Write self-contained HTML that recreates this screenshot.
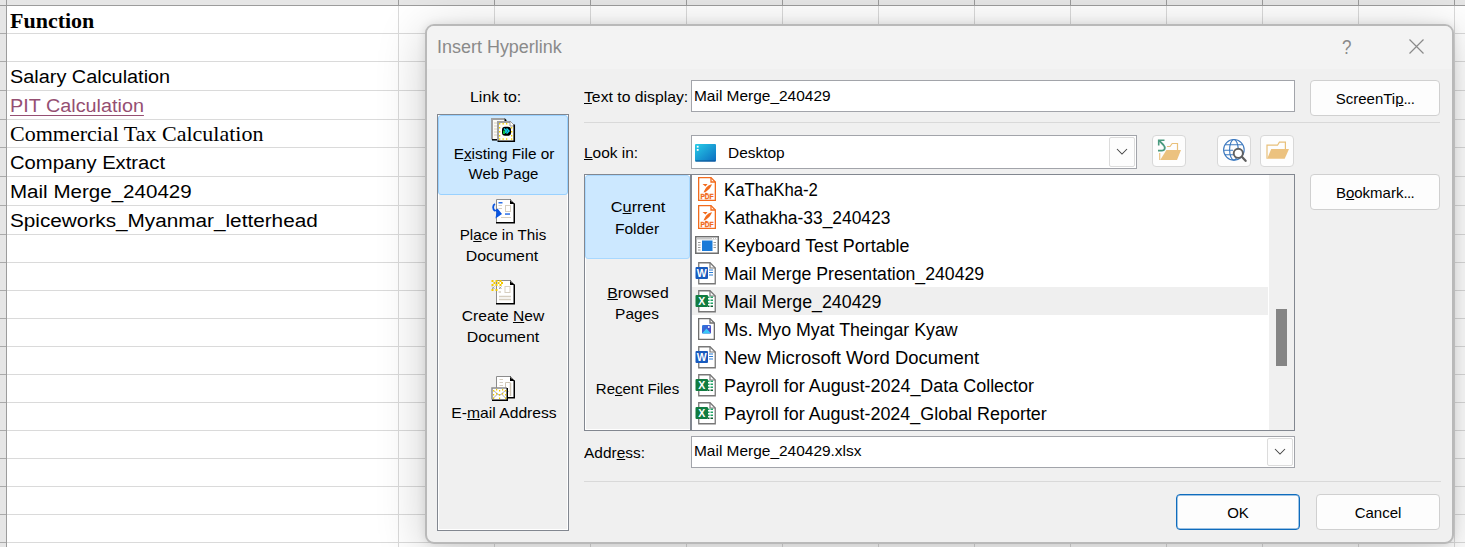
<!DOCTYPE html>
<html><head><meta charset="utf-8">
<style>
*{margin:0;padding:0;box-sizing:border-box}
html,body{width:1465px;height:547px;overflow:hidden;background:#fff;font-family:"Liberation Sans",sans-serif}
.abs{position:absolute}
.vl{position:absolute;top:0;width:1px;height:547px;background:#dadada}
.hl{position:absolute;left:0;height:1px;width:1465px;background:#dadada}
.t{position:absolute;white-space:nowrap;line-height:1;color:#000}
.u{text-decoration:underline;text-decoration-thickness:1px;text-underline-offset:1.2px}
.btn{position:absolute;background:#fdfdfd;border:1px solid #d0d0d0;border-radius:4px}
.inp{position:absolute;background:#fff;border:1px solid #a2a4aa}
.sep{position:absolute;height:1px;background:#d9d9d9}
svg{position:absolute;overflow:visible}
</style></head><body>
<div class="abs" style="left:0;top:0;width:1465px;height:5px;background:#e6e6e6"></div>
<div class="abs" style="left:0;top:0;width:6px;height:547px;background:#e6e6e6"></div>
<div class="hl" style="top:33px"></div>
<div class="hl" style="top:61px"></div>
<div class="hl" style="top:90px"></div>
<div class="hl" style="top:119px"></div>
<div class="hl" style="top:147px"></div>
<div class="hl" style="top:176px"></div>
<div class="hl" style="top:205px"></div>
<div class="hl" style="top:234px"></div>
<div class="hl" style="top:262px"></div>
<div class="hl" style="top:290px"></div>
<div class="hl" style="top:318px"></div>
<div class="hl" style="top:346px"></div>
<div class="hl" style="top:374px"></div>
<div class="hl" style="top:402px"></div>
<div class="hl" style="top:430px"></div>
<div class="hl" style="top:458px"></div>
<div class="hl" style="top:486px"></div>
<div class="hl" style="top:514px"></div>
<div class="hl" style="top:542px"></div>
<div class="vl" style="left:398px"></div>
<div class="vl" style="left:494px"></div>
<div class="vl" style="left:590px"></div>
<div class="vl" style="left:686px"></div>
<div class="vl" style="left:782px"></div>
<div class="vl" style="left:878px"></div>
<div class="vl" style="left:974px"></div>
<div class="vl" style="left:1070px"></div>
<div class="vl" style="left:1166px"></div>
<div class="vl" style="left:1262px"></div>
<div class="vl" style="left:1358px"></div>
<div class="vl" style="left:1454px"></div>
<div class="abs" style="left:398px;top:0;width:1px;height:5px;background:#9c9c9c"></div>
<div class="abs" style="left:494px;top:0;width:1px;height:5px;background:#9c9c9c"></div>
<div class="abs" style="left:590px;top:0;width:1px;height:5px;background:#9c9c9c"></div>
<div class="abs" style="left:686px;top:0;width:1px;height:5px;background:#9c9c9c"></div>
<div class="abs" style="left:782px;top:0;width:1px;height:5px;background:#9c9c9c"></div>
<div class="abs" style="left:878px;top:0;width:1px;height:5px;background:#9c9c9c"></div>
<div class="abs" style="left:974px;top:0;width:1px;height:5px;background:#9c9c9c"></div>
<div class="abs" style="left:1070px;top:0;width:1px;height:5px;background:#9c9c9c"></div>
<div class="abs" style="left:1166px;top:0;width:1px;height:5px;background:#9c9c9c"></div>
<div class="abs" style="left:1262px;top:0;width:1px;height:5px;background:#9c9c9c"></div>
<div class="abs" style="left:1358px;top:0;width:1px;height:5px;background:#9c9c9c"></div>
<div class="abs" style="left:1454px;top:0;width:1px;height:5px;background:#9c9c9c"></div>
<div class="abs" style="left:0;top:5px;width:1465px;height:1px;background:#9c9c9c"></div>
<div class="abs" style="left:6px;top:0;width:1px;height:547px;background:#9c9c9c"></div>
<div class="abs" style="left:0;top:33px;width:6px;height:1px;background:#ababab"></div>
<div class="abs" style="left:0;top:61px;width:6px;height:1px;background:#ababab"></div>
<div class="abs" style="left:0;top:90px;width:6px;height:1px;background:#ababab"></div>
<div class="abs" style="left:0;top:119px;width:6px;height:1px;background:#ababab"></div>
<div class="abs" style="left:0;top:147px;width:6px;height:1px;background:#ababab"></div>
<div class="abs" style="left:0;top:176px;width:6px;height:1px;background:#ababab"></div>
<div class="abs" style="left:0;top:205px;width:6px;height:1px;background:#ababab"></div>
<div class="abs" style="left:0;top:234px;width:6px;height:1px;background:#ababab"></div>
<div class="abs" style="left:0;top:262px;width:6px;height:1px;background:#ababab"></div>
<div class="abs" style="left:0;top:290px;width:6px;height:1px;background:#ababab"></div>
<div class="abs" style="left:0;top:318px;width:6px;height:1px;background:#ababab"></div>
<div class="abs" style="left:0;top:346px;width:6px;height:1px;background:#ababab"></div>
<div class="abs" style="left:0;top:374px;width:6px;height:1px;background:#ababab"></div>
<div class="abs" style="left:0;top:402px;width:6px;height:1px;background:#ababab"></div>
<div class="abs" style="left:0;top:430px;width:6px;height:1px;background:#ababab"></div>
<div class="abs" style="left:0;top:458px;width:6px;height:1px;background:#ababab"></div>
<div class="abs" style="left:0;top:486px;width:6px;height:1px;background:#ababab"></div>
<div class="abs" style="left:0;top:514px;width:6px;height:1px;background:#ababab"></div>
<div class="abs" style="left:0;top:542px;width:6px;height:1px;background:#ababab"></div>
<div class="t" style="left:10px;top:10.38px;font-size:22px;color:#000;font-family:'Liberation Serif',serif;font-weight:bold;">Function</div>
<div class="t" style="left:10px;top:67.76px;font-size:18px;color:#000;font-family:'Liberation Sans',sans-serif;font-weight:normal;transform:scaleX(1.104);transform-origin:left top;">Salary Calculation</div>
<div class="t" style="left:10px;top:97.26px;font-size:18px;color:#954f72;font-family:'Liberation Sans',sans-serif;font-weight:normal;transform:scaleX(1.1);transform-origin:left top;"><span class="u" style="text-underline-offset:2.5px">PIT Calculation</span></div>
<div class="t" style="left:10px;top:123.08px;font-size:22px;color:#000;font-family:'Liberation Serif',serif;font-weight:normal;">Commercial Tax Calculation</div>
<div class="t" style="left:10px;top:154.26px;font-size:18px;color:#000;font-family:'Liberation Sans',sans-serif;font-weight:normal;transform:scaleX(1.123);transform-origin:left top;">Company Extract</div>
<div class="t" style="left:10px;top:183.06px;font-size:18px;color:#000;font-family:'Liberation Sans',sans-serif;font-weight:normal;transform:scaleX(1.142);transform-origin:left top;">Mail Merge_240429</div>
<div class="t" style="left:10px;top:211.96px;font-size:18px;color:#000;font-family:'Liberation Sans',sans-serif;font-weight:normal;transform:scaleX(1.152);transform-origin:left top;">Spiceworks_Myanmar_letterhead</div>
<div class="abs" style="left:425px;top:24px;width:1029px;height:520px;background:#f0f0f0;border:2px solid #b9b9b9;border-radius:9px;box-shadow:0 0 10px rgba(0,0,0,0.10),0 8px 50px rgba(0,0,0,0.20);overflow:hidden"><div class="abs" style="left:0;top:0;width:100%;height:43px;background:#f3f3f3"></div></div>
<div class="t" style="left:437.4px;top:37.86px;font-size:18px;color:#8a8a8a;font-family:'Liberation Sans',sans-serif;font-weight:normal;transform:scaleX(0.998);transform-origin:left top;">Insert Hyperlink</div>
<div class="t" style="left:1342px;top:36.97px;font-size:20px;color:#8a8a8a;font-family:'Liberation Sans',sans-serif;font-weight:normal;transform:scaleX(0.85);transform-origin:left top;">?</div>
<svg style="left:1409px;top:39px" width="15" height="15"><path d="M0.5 0.5L14.5 14.5M14.5 0.5L0.5 14.5" stroke="#8a8a8a" stroke-width="1.2"/></svg>
<div class="t" style="left:470.2px;top:89.30px;font-size:15px;color:#000;font-family:'Liberation Sans',sans-serif;font-weight:normal;transform:scaleX(1.06);transform-origin:left top;">Link to:</div>
<div class="abs" style="left:437px;top:114px;width:132px;height:417px;border:1px solid #828790;background:#f0f0f0;box-shadow:inset 0 0 0 1px #fff"></div>
<div class="abs" style="left:438px;top:115px;width:130px;height:80px;background:#cce8ff;border:1px solid #99d1ff;border-radius:3px"></div>
<div class="t" style="left:303.5px;width:400px;text-align:center;top:146.30px;font-size:15px;color:#000;font-family:'Liberation Sans',sans-serif;font-weight:normal;transform:scaleX(1.024);transform-origin:center top;">E<span class="u">x</span>isting File or</div>
<div class="t" style="left:303.5px;width:400px;text-align:center;top:166.40px;font-size:15px;color:#000;font-family:'Liberation Sans',sans-serif;font-weight:normal;">Web Page</div>
<div class="t" style="left:302.8px;width:400px;text-align:center;top:227.30px;font-size:15px;color:#000;font-family:'Liberation Sans',sans-serif;font-weight:normal;transform:scaleX(1.01);transform-origin:center top;">Pl<span class="u">a</span>ce in This</div>
<div class="t" style="left:302.4px;width:400px;text-align:center;top:248.30px;font-size:15px;color:#000;font-family:'Liberation Sans',sans-serif;font-weight:normal;transform:scaleX(1.06);transform-origin:center top;">Document</div>
<div class="t" style="left:302.8px;width:400px;text-align:center;top:307.90px;font-size:15px;color:#000;font-family:'Liberation Sans',sans-serif;font-weight:normal;transform:scaleX(1.04);transform-origin:center top;">Create <span class="u">N</span>ew</div>
<div class="t" style="left:302.6px;width:400px;text-align:center;top:329.30px;font-size:15px;color:#000;font-family:'Liberation Sans',sans-serif;font-weight:normal;transform:scaleX(1.06);transform-origin:center top;">Document</div>
<div class="t" style="left:303.5px;width:400px;text-align:center;top:404.60px;font-size:15px;color:#000;font-family:'Liberation Sans',sans-serif;font-weight:normal;transform:scaleX(1.045);transform-origin:center top;">E-<span class="u">m</span>ail Address</div>
<svg style="left:491px;top:118px" width="25" height="25" viewBox="0 0 25 25">
<path d="M0.5 0.5H13.5L15 2V21.5H0.5Z" fill="#fbfbf8"/>
<path d="M1 21.5V1H13.5" stroke="#a0a0a0" stroke-width="2" fill="none"/>
<path d="M13.5 0L15.5 2V4H13.5Z" fill="#000"/>
<path d="M1 21.8H6" stroke="#000" stroke-width="1.5"/>
<g stroke="#d8d0c0"><path d="M3 5H6M3 8H6M3 11H6M3 14H6M3 17H6"/></g>
<path d="M6.5 3.5H19.5L23.5 7.5V23H6.5Z" fill="#fffef8"/>
<path d="M7 23V4H19" stroke="#a0a0a0" stroke-width="2" fill="none"/>
<path d="M19 3L24 8H19Z" fill="#fff" stroke="#888" stroke-width="0.8"/>
<path d="M23.25 6.5V23.25H6.5" stroke="#000" stroke-width="1.6" fill="none"/>
<g fill="#f5d400"><rect x="8" y="5" width="1.3" height="1.5"/><rect x="11.5" y="5" width="1.3" height="1.5"/><rect x="15" y="5" width="1.3" height="1.5"/><rect x="8" y="9" width="1.3" height="1.5"/><rect x="8" y="13" width="1.3" height="1.5"/><rect x="8" y="17" width="1.3" height="1.5"/><rect x="8" y="20.3" width="1.3" height="1.5"/><rect x="20" y="9" width="1.3" height="1.5"/><rect x="20" y="13" width="1.3" height="1.5"/><rect x="20" y="17" width="1.3" height="1.5"/><rect x="20" y="20.3" width="1.3" height="1.5"/><rect x="11.5" y="20.3" width="1.3" height="1.5"/><rect x="15" y="20.3" width="1.3" height="1.5"/></g>
<rect x="11" y="8.8" width="9" height="9" rx="3" fill="#000"/>
<path d="M13 10.5L15.5 13L13 15.5M15.5 10.5L18 13L15.5 15.5" stroke="#18d8f0" stroke-width="1.5" fill="none"/>
<rect x="12" y="12.5" width="2" height="3.5" fill="#10c040"/>
</svg>
<svg style="left:491px;top:199px" width="25" height="25" viewBox="0 0 25 25">
<path d="M5.5 0.5H19.5L23.5 4.5V23.5H5.5Z" fill="#fff"/>
<path d="M5.5 23.5V0.5H19.5" stroke="#8c8c8c" fill="none"/>
<path d="M19 0L24 5H19Z" fill="#000"/><path d="M19.8 1.5L20.8 2.5" stroke="#fff"/>
<path d="M23.25 4.5V23.75H5" stroke="#000" stroke-width="1.5" fill="none"/>
<rect x="7.5" y="3" width="4" height="1.5" fill="#2a6fe8"/>
<path d="M7.5 6.5H11M7.5 9.5H11M10 18.5H20" stroke="#d6cec0" stroke-width="1.2"/>
<rect x="14.5" y="6.5" width="5" height="6" fill="none" stroke="#d6cec0"/>
<rect x="14" y="14.3" width="5" height="1.5" fill="#2a6fe8"/>
<path d="M4 5C1.5 6 1.5 10.5 4 12" stroke="#0a55e0" stroke-width="1.8" fill="none"/>
<path d="M3.5 11.5L5.5 13L4.5 19.5L11 15L6.5 9.5Z" fill="#0a55e0"/>
</svg>
<svg style="left:491px;top:279px" width="25" height="26" viewBox="0 0 25 26">
<path d="M5.5 1.5H19.5L23.5 5.5V24.5H5.5Z" fill="#fff"/>
<path d="M5.5 24.5V1.5H19.5" stroke="#8c8c8c" fill="none"/>
<path d="M19 1L24 6H19Z" fill="#000"/><path d="M19.8 2.5L20.8 3.5" stroke="#fff"/>
<path d="M23.25 5.5V24.75H5" stroke="#000" stroke-width="1.5" fill="none"/>
<path d="M7.5 13H10M8 17.5H20M8 20.5H20" stroke="#d6cec0" stroke-width="1.3"/>
<rect x="14" y="7.5" width="5" height="6" fill="none" stroke="#d6cec0"/>
<g fill="#f2c800"><rect x="0.5" y="1" width="2" height="2"/><rect x="4.5" y="1" width="2" height="2"/><rect x="8.5" y="1" width="2" height="2"/><rect x="2.5" y="3" width="2" height="2"/><rect x="6.5" y="3" width="2" height="2"/><rect x="10" y="3" width="2" height="2"/><rect x="0.5" y="5" width="2" height="2"/><rect x="4.5" y="5" width="2" height="2"/><rect x="8.5" y="5" width="2" height="2"/><rect x="0.5" y="10" width="2" height="2"/><rect x="4.5" y="10" width="2" height="2"/></g>
<g stroke="#9a9a9a" stroke-width="0.9"><path d="M1 7.5L3.5 10M3.5 7.5L1 10M8 7.5L10.5 10M10.5 7.5L8 10"/></g>
</svg>
<svg style="left:491px;top:376px" width="25" height="25" viewBox="0 0 25 25">
<path d="M5.5 0.5H19.5L23.5 4.5V21.5H5.5Z" fill="#fff"/>
<path d="M5.5 12V0.5H19.5" stroke="#8c8c8c" fill="none"/>
<path d="M19 0L24 5H19Z" fill="#000"/><path d="M19.8 1.5L20.8 2.5" stroke="#fff"/>
<path d="M23.25 4.5V21.75H16" stroke="#000" stroke-width="1.5" fill="none"/>
<path d="M8.5 3.5H12M8.5 6.5H12M8.5 9.5H12M15 15.5H18" stroke="#d6cec0" stroke-width="1.2"/>
<path d="M14.5 20V6.5H19.5" stroke="#cfc6b6" fill="none"/><path d="M19.5 7V20" stroke="#cfc6b6" stroke-width="1.5"/>
<rect x="1" y="12" width="15.5" height="11" fill="#fff"/>
<path d="M1 23.5V12H16" stroke="#8c8c8c" stroke-width="1.5" fill="none"/>
<path d="M16.25 12V24.25H1" stroke="#000" stroke-width="1.5" fill="none"/>
<path d="M2.5 14.5L8.5 19.5L14.5 14.5M2.5 22L6.5 18M14.5 22L10.5 18" stroke="#a8a8b8" stroke-width="1" fill="none"/>
<g fill="#f0c800"><rect x="2" y="14" width="1.2" height="1.5"/><rect x="2" y="18" width="1.2" height="1.5"/><rect x="2" y="21.5" width="1.2" height="1.5"/><rect x="5" y="13" width="1.2" height="1.5"/><rect x="5" y="17" width="1.2" height="1.5"/><rect x="8" y="14" width="1.2" height="1.5"/><rect x="8" y="18" width="1.2" height="1.5"/><rect x="8" y="21.5" width="1.2" height="1.5"/><rect x="11" y="13" width="1.2" height="1.5"/><rect x="11" y="17" width="1.2" height="1.5"/><rect x="14" y="14" width="1.2" height="1.5"/><rect x="14" y="18" width="1.2" height="1.5"/><rect x="14" y="21.5" width="1.2" height="1.5"/></g>
</svg>
<div class="t" style="left:584px;top:89.00px;font-size:15px;color:#000;font-family:'Liberation Sans',sans-serif;font-weight:normal;transform:scaleX(1.05);transform-origin:left top;"><span class="u">T</span>ext to display:</div>
<div class="inp" style="left:691px;top:80px;width:604px;height:32px"></div>
<div class="t" style="left:694.3px;top:87.50px;font-size:15px;color:#000;font-family:'Liberation Sans',sans-serif;font-weight:normal;transform:scaleX(1.03);transform-origin:left top;">Mail Merge_240429</div>
<div class="btn" style="left:1310px;top:80px;width:130px;height:36px"></div>
<div class="t" style="left:1175px;width:400px;text-align:center;top:91.30px;font-size:15px;color:#000;font-family:'Liberation Sans',sans-serif;font-weight:normal;">ScreenTi<span class="u">p</span><span style="letter-spacing:-0.6px">...</span></div>
<div class="sep" style="left:584px;top:122px;width:856px"></div>
<div class="t" style="left:584px;top:145.30px;font-size:15px;color:#000;font-family:'Liberation Sans',sans-serif;font-weight:normal;transform:scaleX(1.03);transform-origin:left top;"><span class="u">L</span>ook in:</div>
<div class="inp" style="left:691px;top:135px;width:446px;height:34px"></div>
<div class="abs" style="left:1109px;top:137px;width:26px;height:30px;background:#fdfdfd;border:1px solid #dcdcdc;border-radius:2px"></div>
<svg style="left:1116px;top:148px" width="12" height="8"><path d="M1 1L6 6L11 1" stroke="#444" stroke-width="1.05" fill="none"/></svg>
<svg style="left:695px;top:144px" width="22" height="18" viewBox="0 0 22 18"><defs><linearGradient id="dg" x1="0" y1="0" x2="1" y2="1"><stop offset="0" stop-color="#28cde8"/><stop offset="1" stop-color="#0b6cc0"/></linearGradient></defs><rect x="0" y="0" width="21" height="17.5" rx="1" fill="url(#dg)"/><rect x="0.5" y="16.5" width="20" height="1" fill="#0a4f90"/><rect x="1.8" y="1.8" width="1.8" height="1.8" fill="#fff"/><rect x="1.8" y="5" width="1.8" height="1.8" fill="#fff"/></svg>
<div class="t" style="left:727.5px;top:145.30px;font-size:15px;color:#000;font-family:'Liberation Sans',sans-serif;font-weight:normal;transform:scaleX(1.03);transform-origin:left top;">Desktop</div>
<div class="btn" style="left:1152px;top:135px;width:34px;height:32px;border-color:#d8d8d8"></div>
<div class="btn" style="left:1217px;top:135px;width:34px;height:32px;border-color:#d8d8d8"></div>
<div class="btn" style="left:1260px;top:135px;width:34px;height:32px;border-color:#d8d8d8"></div>
<svg style="left:1157px;top:139px" width="26" height="24" viewBox="0 0 26 24">
<path d="M10 7.5H13L15.2 4.5H20.5V11.5" fill="none" stroke="#e9c07a" stroke-width="1.2"/>
<path d="M2.7 14V21" stroke="#ecc27f" stroke-width="1.2"/>
<path d="M9.4 11H24L20 21H3.2Z" fill="#ecc27f"/>
<path d="M1.7 6.5V1.2H7.5" fill="none" stroke="#4a9a7f" stroke-width="1.6"/>
<path d="M2.2 1.7L6.5 6C8.6 8.2 8.2 11.6 4.8 11.6H1" fill="none" stroke="#4a9a7f" stroke-width="1.8"/>
</svg>
<svg style="left:1222px;top:139px" width="26" height="25" viewBox="0 0 26 25">
<circle cx="11.9" cy="10.8" r="10.3" fill="none" stroke="#3b78bf" stroke-width="1.1"/>
<ellipse cx="11.9" cy="10.8" rx="4.3" ry="10.3" fill="none" stroke="#3b78bf" stroke-width="1.1"/>
<path d="M3 5.8H20.8M3 15.8H20.8M1.6 11.2H11" stroke="#3b78bf" stroke-width="1.1"/>
<circle cx="16.3" cy="14.3" r="4.6" fill="#fff" stroke="#5f5f5f" stroke-width="1.9"/>
<path d="M19.8 17.8L23.6 21.8" stroke="#5f5f5f" stroke-width="2.3" stroke-linecap="round"/>
</svg>
<svg style="left:1264px;top:141px" width="26" height="20" viewBox="0 0 26 20">
<path d="M3 17.7V4.2H13.5L15.4 1.2H21.4V8.5" fill="none" stroke="#e8c07a" stroke-width="1.2"/>
<path d="M7.2 8.1H25L20.7 17.7H3.2Z" fill="#ecc27f"/>
</svg>
<div class="abs" style="left:584px;top:174px;width:108px;height:257px;border:1px solid #828790;background:#f0f0f0;box-shadow:inset 0 0 0 1px #fff"></div>
<div class="abs" style="left:585px;top:175px;width:105px;height:84px;background:#cce8ff;border:1px solid #a8d8ff;border-radius:3px"></div>
<div class="t" style="left:437.70000000000005px;width:400px;text-align:center;top:199.30px;font-size:15px;color:#000;font-family:'Liberation Sans',sans-serif;font-weight:normal;transform:scaleX(1.09);transform-origin:center top;">C<span class="u">u</span>rrent</div>
<div class="t" style="left:437.29999999999995px;width:400px;text-align:center;top:220.70px;font-size:15px;color:#000;font-family:'Liberation Sans',sans-serif;font-weight:normal;transform:scaleX(1.04);transform-origin:center top;">Folder</div>
<div class="t" style="left:437.5px;width:400px;text-align:center;top:285.40px;font-size:15px;color:#000;font-family:'Liberation Sans',sans-serif;font-weight:normal;transform:scaleX(1.05);transform-origin:center top;"><span class="u">B</span>rowsed</div>
<div class="t" style="left:437.29999999999995px;width:400px;text-align:center;top:306.20px;font-size:15px;color:#000;font-family:'Liberation Sans',sans-serif;font-weight:normal;transform:scaleX(1.03);transform-origin:center top;">Pages</div>
<div class="t" style="left:437.5px;width:400px;text-align:center;top:381.10px;font-size:15px;color:#000;font-family:'Liberation Sans',sans-serif;font-weight:normal;">Re<span class="u">c</span>ent Files</div>
<div class="abs" style="left:690px;top:174px;width:605px;height:257px;border:1px solid #828790;border-left:2px solid #828790;background:#fff"></div>
<div class="abs" style="left:692px;top:287px;width:576px;height:28px;background:#efefef"></div>
<div class="abs" style="left:1269px;top:175px;width:25px;height:255px;background:#f0f0f0"></div>
<div class="abs" style="left:1276px;top:309px;width:11px;height:57px;background:#858585"></div>
<div class="t" style="left:724.2px;top:182.10px;font-size:17.6px;transform:scaleX(0.9500);transform-origin:left top">KaThaKha-2</div>
<svg style="left:697px;top:176px" width="20" height="26" viewBox="0 0 20 26"><path d="M1.65 1.65H14L18.35 6V24.35H1.65Z" fill="#fff" stroke="#f26b1d" stroke-width="1.3"/><path d="M14 1.65V6H18.35" fill="none" stroke="#f26b1d" stroke-width="1.3"/><path d="M5.5 8H10.5L8.5 10.5Z" fill="#f26b1d"/><path d="M15 8.2C12 8.5 8.5 11 6.5 16.5C9.5 16 13.5 12.5 15 8.2Z" fill="#f26b1d"/><path d="M8.5 16.5L12 18H8Z" fill="#f26b1d"/><text x="10" y="23" font-family="Liberation Sans" font-size="6.6" font-weight="bold" fill="#f26b1d" stroke="#f26b1d" stroke-width="0.3" text-anchor="middle">PDF</text></svg>
<div class="t" style="left:724.2px;top:210.10px;font-size:17.6px;transform:scaleX(0.9886);transform-origin:left top">Kathakha-33_240423</div>
<svg style="left:697px;top:204px" width="20" height="26" viewBox="0 0 20 26"><path d="M1.65 1.65H14L18.35 6V24.35H1.65Z" fill="#fff" stroke="#f26b1d" stroke-width="1.3"/><path d="M14 1.65V6H18.35" fill="none" stroke="#f26b1d" stroke-width="1.3"/><path d="M5.5 8H10.5L8.5 10.5Z" fill="#f26b1d"/><path d="M15 8.2C12 8.5 8.5 11 6.5 16.5C9.5 16 13.5 12.5 15 8.2Z" fill="#f26b1d"/><path d="M8.5 16.5L12 18H8Z" fill="#f26b1d"/><text x="10" y="23" font-family="Liberation Sans" font-size="6.6" font-weight="bold" fill="#f26b1d" stroke="#f26b1d" stroke-width="0.3" text-anchor="middle">PDF</text></svg>
<div class="t" style="left:724.2px;top:238.10px;font-size:17.6px;transform:scaleX(1.0156);transform-origin:left top">Keyboard Test Portable</div>
<svg style="left:695px;top:236px" width="24" height="18" viewBox="0 0 24 18"><rect x="0.75" y="0.75" width="22.5" height="16.5" fill="#fff" stroke="#6f6f6f" stroke-width="1.5"/><rect x="1.5" y="1.5" width="21" height="2" fill="#c8c8c8"/><g fill="#fff"><rect x="17" y="2" width="1" height="1"/><rect x="19" y="2" width="1" height="1"/><rect x="21" y="2" width="1" height="1"/></g><rect x="7" y="4.5" width="10.5" height="10.5" fill="#1a7ad8"/><g stroke="#9a9a9a"><path d="M3 6.5H5.5M3 9H5.5M3 11.5H5.5M3 14H5.5M18.5 6.5H21M18.5 9H21M18.5 11.5H21"/></g></svg>
<div class="t" style="left:724.2px;top:266.10px;font-size:17.6px;transform:scaleX(1.0035);transform-origin:left top">Mail Merge Presentation_240429</div>
<svg style="left:695px;top:262px" width="22" height="23" viewBox="0 0 22 23"><path d="M3.75 0.75H15L20.25 6V21.75H3.75Z" fill="#fff" stroke="#787878" stroke-width="1.3"/><path d="M15 0.75V6H20.25" fill="none" stroke="#787878" stroke-width="1.2"/><path d="M14 8H18M14 10.5H18M14 13H18" stroke="#2b7cd3" stroke-width="1.1"/><rect x="0.5" y="5" width="12.5" height="12" rx="1" fill="#185abd"/><text x="6.8" y="15.3" font-family="Liberation Sans" font-size="10.5" font-weight="bold" fill="#fff" text-anchor="middle">W</text></svg>
<div class="t" style="left:724.2px;top:294.10px;font-size:17.6px;transform:scaleX(1.0118);transform-origin:left top">Mail Merge_240429</div>
<svg style="left:695px;top:290px" width="22" height="23" viewBox="0 0 22 23"><path d="M3.75 0.75H15L20.25 6V21.75H3.75Z" fill="#fff" stroke="#787878" stroke-width="1.3"/><path d="M15 0.75V6H20.25" fill="none" stroke="#787878" stroke-width="1.2"/><g fill="#21a366"><rect x="13" y="6.5" width="1.5" height="1.5"/><rect x="15.5" y="6.5" width="2.5" height="1.5"/><rect x="13" y="9.5" width="1.5" height="1.5"/><rect x="15.5" y="9.5" width="2.5" height="1.5"/><rect x="13" y="12.5" width="1.5" height="1.5"/><rect x="15.5" y="12.5" width="2.5" height="1.5"/></g><g fill="#0e5c2f"><rect x="13" y="15.5" width="1.5" height="1.5"/><rect x="15.5" y="15.5" width="2.5" height="1.5"/></g><rect x="0.5" y="5" width="12.5" height="12" rx="1" fill="#107c41"/><text x="6.8" y="15.3" font-family="Liberation Sans" font-size="10.5" font-weight="bold" fill="#fff" text-anchor="middle">X</text></svg>
<div class="t" style="left:724.2px;top:322.10px;font-size:17.6px;transform:scaleX(1.0096);transform-origin:left top">Ms. Myo Myat Theingar Kyaw</div>
<svg style="left:697px;top:318px" width="20" height="23" viewBox="0 0 20 23"><path d="M1.65 0.65H13L17.35 5V21.35H1.65Z" fill="#fff" stroke="#6f6f6f" stroke-width="1.3"/><path d="M13 0.65V5H17.35" fill="none" stroke="#6f6f6f" stroke-width="1.3"/><defs><linearGradient id="ig5" x1="0" y1="0" x2="1" y2="1"><stop offset="0" stop-color="#2a7be0"/><stop offset="1" stop-color="#5a3fc0"/></linearGradient></defs><rect x="5" y="7" width="9" height="8.5" rx="1.2" fill="url(#ig5)"/><path d="M5 15.5L9.5 10.5L14 15.5Z" fill="#38c8f8"/><circle cx="11.8" cy="9" r="0.9" fill="#fff"/></svg>
<div class="t" style="left:724.2px;top:350.10px;font-size:17.6px;transform:scaleX(1.0490);transform-origin:left top">New Microsoft Word Document</div>
<svg style="left:695px;top:346px" width="22" height="23" viewBox="0 0 22 23"><path d="M3.75 0.75H15L20.25 6V21.75H3.75Z" fill="#fff" stroke="#787878" stroke-width="1.3"/><path d="M15 0.75V6H20.25" fill="none" stroke="#787878" stroke-width="1.2"/><path d="M14 8H18M14 10.5H18M14 13H18" stroke="#2b7cd3" stroke-width="1.1"/><rect x="0.5" y="5" width="12.5" height="12" rx="1" fill="#185abd"/><text x="6.8" y="15.3" font-family="Liberation Sans" font-size="10.5" font-weight="bold" fill="#fff" text-anchor="middle">W</text></svg>
<div class="t" style="left:724.2px;top:378.10px;font-size:17.6px;transform:scaleX(1.0192);transform-origin:left top">Payroll for August-2024_Data Collector</div>
<svg style="left:695px;top:374px" width="22" height="23" viewBox="0 0 22 23"><path d="M3.75 0.75H15L20.25 6V21.75H3.75Z" fill="#fff" stroke="#787878" stroke-width="1.3"/><path d="M15 0.75V6H20.25" fill="none" stroke="#787878" stroke-width="1.2"/><g fill="#21a366"><rect x="13" y="6.5" width="1.5" height="1.5"/><rect x="15.5" y="6.5" width="2.5" height="1.5"/><rect x="13" y="9.5" width="1.5" height="1.5"/><rect x="15.5" y="9.5" width="2.5" height="1.5"/><rect x="13" y="12.5" width="1.5" height="1.5"/><rect x="15.5" y="12.5" width="2.5" height="1.5"/></g><g fill="#0e5c2f"><rect x="13" y="15.5" width="1.5" height="1.5"/><rect x="15.5" y="15.5" width="2.5" height="1.5"/></g><rect x="0.5" y="5" width="12.5" height="12" rx="1" fill="#107c41"/><text x="6.8" y="15.3" font-family="Liberation Sans" font-size="10.5" font-weight="bold" fill="#fff" text-anchor="middle">X</text></svg>
<div class="t" style="left:724.2px;top:406.10px;font-size:17.6px;transform:scaleX(1.0187);transform-origin:left top">Payroll for August-2024_Global Reporter</div>
<svg style="left:695px;top:402px" width="22" height="23" viewBox="0 0 22 23"><path d="M3.75 0.75H15L20.25 6V21.75H3.75Z" fill="#fff" stroke="#787878" stroke-width="1.3"/><path d="M15 0.75V6H20.25" fill="none" stroke="#787878" stroke-width="1.2"/><g fill="#21a366"><rect x="13" y="6.5" width="1.5" height="1.5"/><rect x="15.5" y="6.5" width="2.5" height="1.5"/><rect x="13" y="9.5" width="1.5" height="1.5"/><rect x="15.5" y="9.5" width="2.5" height="1.5"/><rect x="13" y="12.5" width="1.5" height="1.5"/><rect x="15.5" y="12.5" width="2.5" height="1.5"/></g><g fill="#0e5c2f"><rect x="13" y="15.5" width="1.5" height="1.5"/><rect x="15.5" y="15.5" width="2.5" height="1.5"/></g><rect x="0.5" y="5" width="12.5" height="12" rx="1" fill="#107c41"/><text x="6.8" y="15.3" font-family="Liberation Sans" font-size="10.5" font-weight="bold" fill="#fff" text-anchor="middle">X</text></svg>
<div class="btn" style="left:1310px;top:174px;width:130px;height:36px"></div>
<div class="t" style="left:1175px;width:400px;text-align:center;top:185.30px;font-size:15px;color:#000;font-family:'Liberation Sans',sans-serif;font-weight:normal;">B<span class="u">o</span>okmark<span style="letter-spacing:-0.6px">...</span></div>
<div class="t" style="left:584px;top:444.80px;font-size:15px;color:#000;font-family:'Liberation Sans',sans-serif;font-weight:normal;transform:scaleX(1.03);transform-origin:left top;">Addr<span class="u">e</span>ss:</div>
<div class="inp" style="left:691px;top:436px;width:604px;height:32px"></div>
<div class="t" style="left:694.3px;top:442.80px;font-size:15px;color:#000;font-family:'Liberation Sans',sans-serif;font-weight:normal;transform:scaleX(1.03);transform-origin:left top;">Mail Merge_240429.xlsx</div>
<div class="abs" style="left:1267px;top:438px;width:26px;height:28px;background:#fdfdfd;border:1px solid #dcdcdc;border-radius:2px"></div>
<svg style="left:1274px;top:448px" width="12" height="8"><path d="M1 1L6 6L11 1" stroke="#444" stroke-width="1.05" fill="none"/></svg>
<div class="sep" style="left:584px;top:481px;width:857px"></div>
<div class="btn" style="left:1176px;top:494px;width:124px;height:36px;border:1px solid #0f6cbd;box-shadow:inset 0 0 0 0.7px rgba(15,108,189,0.55);background:#fdfdfd"></div>
<div class="t" style="left:1038px;width:400px;text-align:center;top:505.30px;font-size:15px;color:#000;font-family:'Liberation Sans',sans-serif;font-weight:normal;">OK</div>
<div class="btn" style="left:1316px;top:494px;width:124px;height:36px"></div>
<div class="t" style="left:1178px;width:400px;text-align:center;top:505.30px;font-size:15px;color:#000;font-family:'Liberation Sans',sans-serif;font-weight:normal;">Cancel</div>
</body></html>
